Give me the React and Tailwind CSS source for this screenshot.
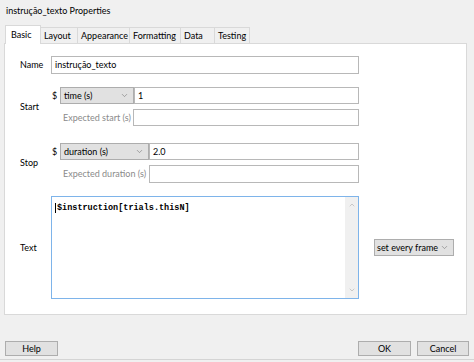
import { ChevronDown, ChevronUp } from 'lucide-react';

const font = { fontFamily: 'Lato, "Noto Sans", sans-serif' };

const Select = ({ label, width }) => (
  <div className={`${width} h-[17px] bg-[#e1e1e1] border border-[#adadad] flex items-center justify-between pl-[3px] pr-[4px]`}>
    <span>{label}</span>
    <ChevronDown size={9} strokeWidth={1.5} className="text-[#707070]" />
  </div>
);

const Input = ({ value, className = '' }) => (
  <div className={`h-[17px] bg-white border border-[#b8b8b8] flex items-center px-[3px] ${className}`}>
    {value}
  </div>
);

const tabs = [
  { name: 'Layout', w: 'w-[37px]' },
  { name: 'Appearance', w: 'w-[52px]' },
  { name: 'Formatting', w: 'w-[51px]' },
  { name: 'Data', w: 'w-[34px]' },
  { name: 'Testing', w: 'w-[35px]' },
];

export default function App() {
  return (
    <div className="w-[474px] h-[362px] bg-[#f0f0f0] flex flex-col overflow-hidden text-[9px] text-black whitespace-nowrap" style={font}>
      {/* Title */}
      <div className="h-[22px] pl-[6px] pt-[3px] leading-[16px]">instrução_texto Properties</div>

      {/* Tabs */}
      <div className="h-[21px] pl-[5px] flex items-end">
        <div className="h-[19px] -mb-px z-10 bg-white border border-b-0 border-[#d9d9d9] pl-[5px] pt-[2px] w-[36px]">Basic</div>
        {tabs.map((t) => (
          <div key={t.name} className={`${t.w} h-[16px] border border-l-0 border-b-0 border-[#d9d9d9] bg-[#f0f0f0] pl-[3px] leading-[15px]`}>
            {t.name}
          </div>
        ))}
      </div>

      {/* Panel */}
      <div className="ml-[4px] w-[463px] h-[272px] bg-white border border-[#d9d9d9] flex flex-col pl-[15px]">
        {/* Name */}
        <div className="mt-[12px] flex items-center">
          <div className="w-[31px]">Name</div>
          <Input value="instrução_texto" className="w-[308px] h-[18px]" />
        </div>

        {/* Start */}
        <div className="mt-[13px] flex items-center">
          <div className="w-[31px]">Start</div>
          <div className="flex flex-col gap-[5px]">
            <div className="flex items-center">
              <span className="w-[9px] pl-[1px]">$</span>
              <Select label="time (s)" width="w-[74px]" />
              <Input value="1" className="w-[225px]" />
            </div>
            <div className="flex items-center">
              <span className="w-[82px] pl-[12px] text-[#8a8a8a]">Expected start (s)</span>
              <Input value="" className="w-[226px]" />
            </div>
          </div>
        </div>

        {/* Stop */}
        <div className="mt-[17px] flex items-center">
          <div className="w-[31px]">Stop</div>
          <div className="flex flex-col gap-[5px]">
            <div className="flex items-center">
              <span className="w-[9px] pl-[1px]">$</span>
              <Select label="duration (s)" width="w-[89px]" />
              <Input value="2.0" className="w-[210px]" />
            </div>
            <div className="flex items-center">
              <span className="w-[98px] pl-[12px] text-[#8a8a8a]">Expected duration (s)</span>
              <Input value="" className="w-[210px] h-[18px]" />
            </div>
          </div>
        </div>

        {/* Text */}
        <div className="mt-[13px] flex items-center">
          <div className="w-[31px]">Text</div>
          <div className="w-[308px] h-[103px] border border-[#7eb4ea] bg-white flex">
            <div className="flex-1 pl-[3px] pt-[3px]">
              <span
                className="font-bold text-[8.5px] leading-[12px] border-l border-black pl-px"
                style={{ fontFamily: '"Liberation Mono", monospace' }}
              >
                $instruction[trials.thisN]
              </span>
            </div>
            <div className="w-[13px] bg-[#f0f0f0] flex flex-col items-center justify-between py-[4px]">
              <ChevronUp size={8} strokeWidth={1.5} className="text-[#a0a0a0]" />
              <ChevronDown size={8} strokeWidth={1.5} className="text-[#a0a0a0]" />
            </div>
          </div>
          <div className="ml-[15px] w-[80px] h-[17px] bg-[#e1e1e1] border border-[#adadad] flex items-center justify-between pl-[2px] pr-[4px]">
            <span>set every frame</span>
            <ChevronDown size={9} strokeWidth={1.5} className="text-[#707070]" />
          </div>
        </div>
      </div>

      {/* Buttons */}
      <div className="mt-[26px] flex px-[5px] items-start">
        <button className="w-[53px] h-[15px] bg-[#e1e1e1] border border-[#adadad] leading-[13px]">Help</button>
        <div className="flex-1" />
        <button className="w-[53px] h-[15px] bg-[#e1e1e1] border border-[#adadad] leading-[13px]">OK</button>
        <button className="ml-[6px] w-[52px] h-[15px] bg-[#e1e1e1] border border-[#adadad] leading-[13px]">Cancel</button>
      </div>
      <div className="mt-[3px] h-px bg-[#d4d4d4]" />
    </div>
  );
}
